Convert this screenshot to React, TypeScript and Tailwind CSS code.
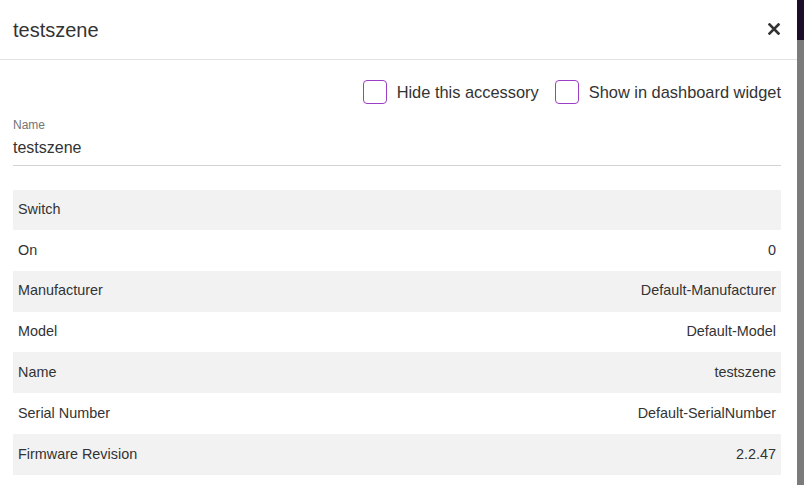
import React from 'react'

type Row = { label: string; value: string }

const rows: Row[] = [
  { label: 'On', value: '0' },
  { label: 'Manufacturer', value: 'Default-Manufacturer' },
  { label: 'Model', value: 'Default-Model' },
  { label: 'Name', value: 'testszene' },
  { label: 'Serial Number', value: 'Default-SerialNumber' },
  { label: 'Firmware Revision', value: '2.2.47' },
]

function Checkbox({ label }: { label: string }) {
  return (
    <label className="flex items-center gap-[10px]">
      <span className="h-[24px] w-[24px] rounded-[4px] border-[1.5px] border-[#9c3fc4] bg-white" />
      <span className="text-[16.4px] leading-[20px] text-[#333]">{label}</span>
    </label>
  )
}

export default function App() {
  return (
    <div
      className="flex h-[485px] w-[804px] overflow-hidden"
      style={{ fontFamily: '"Liberation Sans", Arial, sans-serif' }}
    >
      <div className="flex w-[797px] flex-col bg-white">
        <div className="flex h-[60px] items-center justify-between border-b border-[#e3e3e3] pl-[13px] pr-[17px]">
          <h1 className="text-[20px] leading-none text-[#333]">testszene</h1>
          <svg width="12" height="12" viewBox="0 0 12 12" className="mt-[-2px]">
            <path d="M1.5 1.5 L10.5 10.5 M10.5 1.5 L1.5 10.5" stroke="#333" strokeWidth="2.6" strokeLinecap="square" />
          </svg>
        </div>
        <div className="flex flex-col px-[13px] pr-[16px]">
          <div className="mt-[20px] flex justify-end gap-[16px]">
            <Checkbox label="Hide this accessory" />
            <Checkbox label="Show in dashboard widget" />
          </div>
          <div className="mt-[14px] border-b border-[#d4d4d4] pb-[7px]">
            <div className="text-[12px] leading-[14px] text-[#757575]">Name</div>
            <div className="mt-[6px] text-[16px] leading-[20px] text-[#333]">testszene</div>
          </div>
          <div className="mt-[24px] flex flex-col text-[14.4px] text-[#333]">
            <div className="flex h-[40px] items-center bg-[#f2f2f2] px-[5px]">Switch</div>
            {rows.map((r, i) => (
              <div
                key={r.label}
                className={`flex h-[40.8px] items-center justify-between px-[5px] ${i % 2 === 1 ? 'bg-[#f2f2f2]' : 'bg-white'}`}
              >
                <span>{r.label}</span>
                <span>{r.value}</span>
              </div>
            ))}
          </div>
        </div>
      </div>
      <div className="flex w-[7px] flex-col">
        <div className="h-[40px] bg-[#1c0d2b]" />
        <div className="flex-1 bg-[#7b7b7b]" />
      </div>
    </div>
  )
}
